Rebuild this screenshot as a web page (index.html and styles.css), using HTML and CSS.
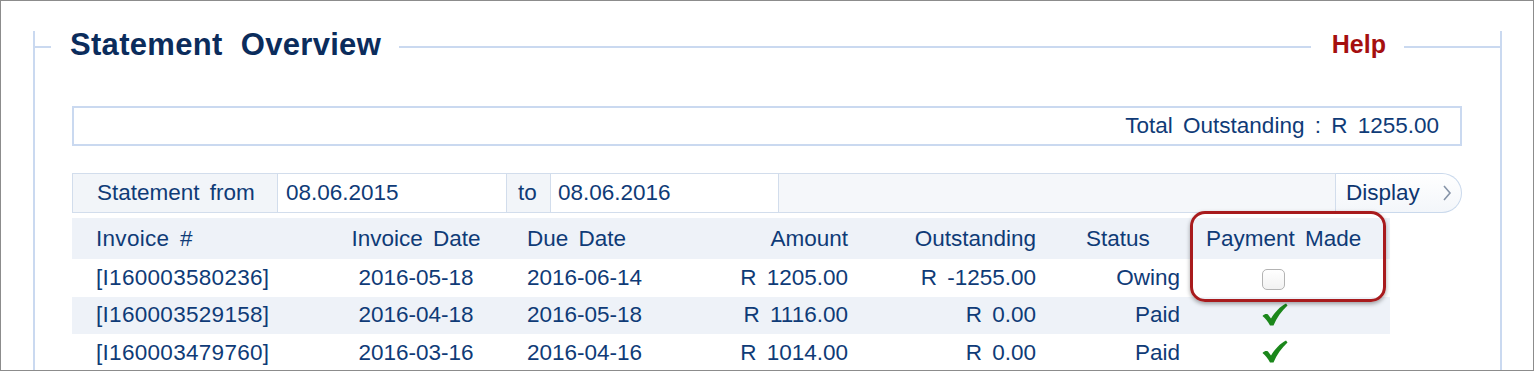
FILE: index.html
```html
<!DOCTYPE html>
<html>
<head>
    <title>Statement Overview</title>
    <link rel="stylesheet" href="styles.css">
</head>
<body>
    <div class="frame">
        <div class="panel">
            <div class="panel-head">
                <div class="line line-start"></div>
                <h1 class="title">Statement Overview</h1>
                <div class="line line-fill"></div>
                <a class="help">Help</a>
                <div class="line line-end"></div>
            </div>
            <div class="panel-body">
                <div class="total">Total Outstanding : R 1255.00</div>

                <div class="range">
                    <div class="cell label">Statement from</div>
                    <div class="cell field from">08.06.2015</div>
                    <div class="cell label to">to</div>
                    <div class="cell field until">08.06.2016</div>
                    <div class="cell filler"></div>
                    <div class="cell display">
                        Display
                        <svg class="chevron" width="10" height="16" viewBox="0 0 10 16">
                            <polyline points="2,1 8,8 2,15" fill="none" stroke="#8694a8" stroke-width="1.6"/>
                        </svg>
                    </div>
                </div>

                <div class="table-wrap">
                    <table class="invoices">
                        <colgroup>
                            <col style="width: 258px">
                            <col style="width: 172px">
                            <col style="width: 198px">
                            <col style="width: 170px">
                            <col style="width: 188px">
                            <col style="width: 134px">
                            <col style="width: 198px">
                        </colgroup>
                        <thead>
                            <tr>
                                <th class="c-inv">Invoice #</th>
                                <th class="c-date">Invoice Date</th>
                                <th class="c-due">Due Date</th>
                                <th class="c-num">Amount</th>
                                <th class="c-num">Outstanding</th>
                                <th class="c-status-h">Status</th>
                                <th class="c-paid-h">Payment Made</th>
                            </tr>
                        </thead>
                        <tbody>
                            <tr>
                                <td class="c-inv">[I160003580236]</td>
                                <td class="c-date">2016-05-18</td>
                                <td class="c-due">2016-06-14</td>
                                <td class="c-num">R 1205.00</td>
                                <td class="c-num">R -1255.00</td>
                                <td class="c-status">Owing</td>
                                <td class="c-paid"><span class="checkbox"></span></td>
                            </tr>
                            <tr>
                                <td class="c-inv">[I160003529158]</td>
                                <td class="c-date">2016-04-18</td>
                                <td class="c-due">2016-05-18</td>
                                <td class="c-num">R 1116.00</td>
                                <td class="c-num">R 0.00</td>
                                <td class="c-status">Paid</td>
                                <td class="c-paid">
                                    <svg class="tick" width="26" height="23" viewBox="0 0 26 23">
                                        <path d="M0.5 13 C2.5 11 4.5 10.5 6 11.5 L9 15.5 C13 9 18 3.5 24 0.5 L25.5 2.5 C19.5 8 14.5 15 11.5 22.5 L8 22.5 C6 18.5 3.5 15.5 0.5 13 Z" fill="#1b871b"/>
                                    </svg>
                                </td>
                            </tr>
                            <tr>
                                <td class="c-inv">[I160003479760]</td>
                                <td class="c-date">2016-03-16</td>
                                <td class="c-due">2016-04-16</td>
                                <td class="c-num">R 1014.00</td>
                                <td class="c-num">R 0.00</td>
                                <td class="c-status">Paid</td>
                                <td class="c-paid">
                                    <svg class="tick" width="26" height="23" viewBox="0 0 26 23">
                                        <path d="M0.5 13 C2.5 11 4.5 10.5 6 11.5 L9 15.5 C13 9 18 3.5 24 0.5 L25.5 2.5 C19.5 8 14.5 15 11.5 22.5 L8 22.5 C6 18.5 3.5 15.5 0.5 13 Z" fill="#1b871b"/>
                                    </svg>
                                </td>
                            </tr>
                        </tbody>
                    </table>
                    <div class="highlight"></div>
                </div>
            </div>
        </div>
    </div>
</body>
</html>
```

FILE: styles.css
```css
body {
    margin: 0;
    background: #ffffff;
    font-family: "Liberation Sans", Arial, sans-serif;
    color: #0f3b77;
    word-spacing: 0.25em;
}

.frame {
    box-sizing: border-box;
    width: 1534px;
    height: 371px;
    border: 1px solid #8c8c8c;
    overflow: hidden;
}

.panel {
    width: 1469px;
    box-sizing: border-box;
    margin: 46px 0 0 32px;
    border: 2px solid #cad9f0;
    border-top: 0;
    height: 400px;
}

.panel-head {
    display: flex;
    align-items: center;
    height: 32px;
    margin: -16px -2px 0;
}

.line {
    height: 2px;
    background: #cad9f0;
}

.line-start {
    width: 18px;
}

.line-fill {
    flex: 1;
}

.line-end {
    width: 98px;
}

.title {
    margin: -4px 18px 0 19px;
    font-size: 31px;
    font-weight: bold;
    color: #0b2c5c;
    line-height: 32px;
    word-spacing: 0.3em;
    letter-spacing: 0.3px;
}

.help {
    margin: -6px 18px 0 21px;
    font-size: 25px;
    font-weight: bold;
    color: #a50f0f;
    line-height: 32px;
}

.panel-body {
    padding: 43px 38px 0 37px;
}

.total {
    box-sizing: border-box;
    height: 40px;
    border: 2px solid #cad9f0;
    padding-right: 21px;
    text-align: right;
    font-size: 22.5px;
    line-height: 36px;
}

.range {
    display: flex;
    height: 40px;
    margin-top: 27px;
    font-size: 22.5px;
}

.cell {
    box-sizing: border-box;
    height: 40px;
    line-height: 38px;
    border: 1px solid #d2ddec;
    border-left: 0;
    background: #f2f5f9;
}

.label {
    width: 206px;
    padding-left: 24px;
    border-left: 1px solid #d2ddec;
}

.to {
    width: 44px;
    padding-left: 11px;
    border-left: 0;
}

.field {
    background: #ffffff;
}

.from {
    width: 229px;
    padding-left: 8px;
}

.until {
    width: 228px;
    padding-left: 7px;
}

.filler {
    width: 557px;
    background: #f5f7fa;
}

.display {
    flex: 1;
    display: flex;
    align-items: center;
    justify-content: space-between;
    padding: 0 9px 0 10px;
    border-radius: 0 20px 20px 0;
    background: linear-gradient(#ffffff, #f3f6fa);
    border-color: #cad9ec;
    color: #0d3670;
}

.chevron {
    display: block;
}

.table-wrap {
    position: relative;
    margin-top: 5px;
}

.invoices {
    width: 1318px;
    table-layout: fixed;
    border-collapse: collapse;
    font-size: 22.5px;
}

.invoices th {
    height: 41px;
    padding: 0;
    font-weight: normal;
    background: #eef2f8;
}

.invoices td {
    height: 37.5px;
    padding: 0;
    white-space: nowrap;
}

.invoices tbody tr:nth-child(even) td {
    background: #eef2f8;
}

.c-inv {
    text-align: left;
    padding-left: 24px !important;
    letter-spacing: 0.3px;
}

.c-date {
    text-align: center;
}

.c-due {
    text-align: left;
    padding-left: 25px !important;
}

.c-num {
    text-align: right;
    padding-right: 22px !important;
}

.c-status-h {
    text-align: left;
    padding-left: 28px !important;
}

.c-status {
    text-align: right;
    padding-right: 12px !important;
}

.c-paid-h {
    text-align: left;
    padding-left: 14px !important;
}

.c-paid {
    text-align: left;
    padding-left: 70px !important;
}

.checkbox {
    display: inline-block;
    box-sizing: border-box;
    width: 23px;
    height: 21px;
    margin-top: 2px;
    border: 1px solid #b3b3b3;
    border-radius: 5px;
    background: linear-gradient(#ffffff, #f2f2f2);
    vertical-align: middle;
}

.tick {
    display: block;
    margin-top: -2px;
}

.highlight {
    position: absolute;
    left: 1118px;
    top: -7px;
    width: 196px;
    height: 91px;
    box-sizing: border-box;
    border: 3px solid #a81b1d;
    border-radius: 15px;
    box-shadow: 0 2px 4px rgba(0, 0, 0, 0.35);
}
```
